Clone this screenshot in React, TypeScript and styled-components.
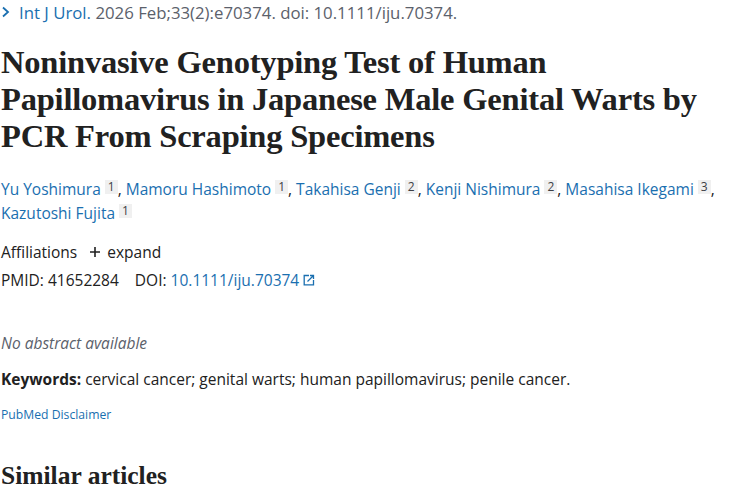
import styled, {createGlobalStyle} from 'styled-components'

const GlobalStyle = createGlobalStyle`
  html, body {
    margin: 0;
    padding: 0;
    background: #ffffff;
  }
  body {
    font-family: "Open Sans", "Noto Sans", sans-serif;
    color: #212121;
  }
`

const Page = styled.main`
  width: 750px;
  height: 500px;
  overflow: hidden;
  padding: 0 0 0 1px;
  box-sizing: border-box;
`

const Citation = styled.div`
  display: flex;
  align-items: center;
  height: 24px;
  font-size: 16.8px;
  color: #5b616b;
  white-space: nowrap;
`

const Chevron = styled.svg`
  width: 10px;
  height: 12px;
  margin-right: 8px;
  flex: none;
`

const Link = styled.a`
  color: #1a6fb0;
  text-decoration: none;
`

const Title = styled.h1`
  margin: 20px 0 0;
  max-width: 715px;
  font-family: "Liberation Serif", "DejaVu Serif", serif;
  font-weight: 700;
  font-size: 32.5px;
  line-height: 37px;
  color: #212121;
  letter-spacing: -0.2px;
`

const Authors = styled.div`
  margin-top: 22px;
  font-size: 15.5px;
  line-height: 24px;
  color: #212121;
`

const Sup = styled.sup`
  display: inline-block;
  vertical-align: 4px;
  margin-left: 4px;
  padding: 0 3px;
  font-size: 12px;
  line-height: 14px;
  color: #3d4045;
  background: #f0f0f0;
`

const Row = styled.div<{$top?: number}>`
  display: flex;
  align-items: center;
  margin-top: ${p => p.$top ?? 0}px;
  font-size: 15.5px;
  height: 28px;
  color: #212121;
`

const Expand = styled.span`
  display: inline-flex;
  align-items: center;
  margin-left: 12px;
  gap: 6px;
`

const Id = styled.span`
  margin-right: 16px;
`

const ExtIcon = styled.svg`
  width: 12px;
  height: 12px;
  margin-left: 4px;
`

const NoAbstract = styled.p`
  margin: 37px 0 0;
  font-size: 15.5px;
  font-style: italic;
  color: #5b616b;
  line-height: 24px;
`

const Keywords = styled.p`
  margin: 12px 0 0;
  font-size: 15.5px;
  line-height: 24px;
`

const Disclaimer = styled.div`
  margin-top: 12px;
  font-size: 12.2px;
  line-height: 24px;
`

const SectionTitle = styled.h2`
  margin: 34px 0 0;
  font-family: "Liberation Serif", "DejaVu Serif", serif;
  font-weight: 700;
  font-size: 25.5px;
  line-height: 30px;
  color: #212121;
`

const authors: [string, number][] = [
  ['Yu Yoshimura', 1],
  ['Mamoru Hashimoto', 1],
  ['Takahisa Genji', 2],
  ['Kenji Nishimura', 2],
  ['Masahisa Ikegami', 3],
  ['Kazutoshi Fujita', 1],
]

export default function App() {
  return (
    <>
      <GlobalStyle />
      <Page>
        <Citation>
          <Chevron viewBox="0 0 10 12">
            <path d="M2 1.5 L7 6 L2 10.5" fill="none" stroke="#1a6fb0" strokeWidth="1.8" />
          </Chevron>
          <Link href="#">Int J Urol.</Link>
          &nbsp;2026 Feb;33(2):e70374. doi: 10.1111/iju.70374.
        </Citation>

        <Title>
          Noninvasive Genotyping Test of Human Papillomavirus in Japanese Male Genital Warts by
          PCR From Scraping Specimens
        </Title>

        <Authors>
          {authors.map(([name, n], i) => (
            <span key={name}>
              <Link href="#">{name}</Link>
              <Sup>{n}</Sup>
              {i < authors.length - 1 ? ', ' : ''}
            </span>
          ))}
        </Authors>

        <Row $top={13}>
          Affiliations
          <Expand>
            <svg width="12" height="12" viewBox="0 0 12 12">
              <path d="M6 1 V11 M1 6 H11" stroke="#212121" strokeWidth="1.6" />
            </svg>
            expand
          </Expand>
        </Row>
        <Row>
          <Id>PMID: 41652284</Id>
          DOI:&nbsp;<Link href="#">10.1111/iju.70374</Link>
          <ExtIcon viewBox="0 0 12 12">
            <path d="M6 1.5 H1.2 V10.8 H10.5 V6" fill="none" stroke="#1a6fb0" strokeWidth="1.3" />
            <path d="M4.5 7.5 L10.5 1.5 M7 1.5 H10.5 V5" fill="none" stroke="#1a6fb0" strokeWidth="1.3" />
          </ExtIcon>
        </Row>

        <NoAbstract>No abstract available</NoAbstract>

        <Keywords>
          <strong>Keywords:</strong> cervical cancer; genital warts; human papillomavirus; penile cancer.
        </Keywords>

        <Disclaimer>
          <Link href="#">PubMed Disclaimer</Link>
        </Disclaimer>

        <SectionTitle>Similar articles</SectionTitle>
      </Page>
    </>
  )
}
